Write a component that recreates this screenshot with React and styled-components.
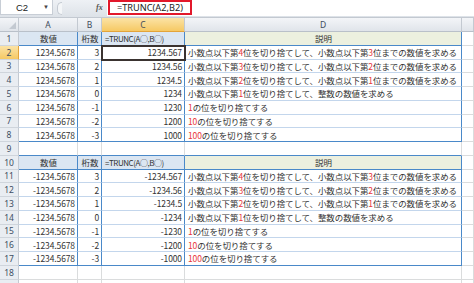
import React from "react";
import styled, { createGlobalStyle, css } from "styled-components";

const Global = createGlobalStyle`
  html, body { margin: 0; padding: 0; background: #ffffff; }
  body { font-family: "Noto Sans CJK JP", "Noto Sans", sans-serif; overflow: hidden; }
`;

const Page = styled.div`
  width: 474px;
  height: 283px;
  overflow: hidden;
  background: #ffffff;
  display: flex;
  flex-direction: column;
`;

const FormulaBar = styled.div`
  height: 18px;
  flex: none;
  display: flex;
  align-items: flex-start;
  background: linear-gradient(#eef1f5, #dde2e8);
  border-bottom: 1px solid #c3c9d1;
  box-sizing: border-box;
`;

const NameBox = styled.div`
  width: 53px;
  flex: none;
  height: 15px;
  box-sizing: border-box;
  background: #fff;
  border: 1px solid #c8ced6;
  border-top: none;
  display: flex;
  align-items: center;
  font-family: "Liberation Sans", sans-serif;
  font-size: 9.5px;
  color: #222;
  padding-left: 15px;
`;

const Arrow = styled.span`
  margin-left: auto;
  margin-right: 3px;
  font-size: 6px;
  color: #444;
`;

const Grip = styled.div`
  flex: none;
  width: 4px;
  height: 11px;
  margin: 2px 0 0 4px;
  border: 1px solid #c4cad2;
  border-right: none;
  border-radius: 5px 0 0 5px;
  background: #f4f6f8;
`;

const Fx = styled.div`
  flex: none;
  margin: 2px 0 0 34px;
  width: 8px;
  font-family: "Liberation Serif", serif;
  font-style: italic;
  font-weight: bold;
  font-size: 8px;
  color: #555;
  line-height: 12px;
`;

const Input = styled.div`
  flex: 1;
  margin-left: 3px;
  height: 16px;
  background: #fff;
  box-sizing: border-box;
  display: flex;
  align-items: flex-start;
  padding-left: 1px;
`;

const FormulaBox = styled.div`
  flex: none;
  width: 84px;
  height: 15px;
  box-sizing: border-box;
  border: 2px solid #e2182b;
  display: flex;
  align-items: center;
  padding-left: 7px;
  font-family: "Noto Sans", sans-serif;
  font-size: 9.2px;
  color: #222;
`;

const Sheet = styled.div`
  display: grid;
  grid-template-columns: 19px 59px 24px 83px 277px 1fr;
  grid-template-rows: 14px;
  grid-auto-rows: 13.75px;
`;

const headerBase = css`
  box-sizing: border-box;
  display: flex;
  align-items: center;
  justify-content: center;
  font-family: "Noto Sans", sans-serif;
  font-size: 8.5px;
  color: #3f4b5a;
  white-space: nowrap;
  overflow: hidden;
`;

const Corner = styled.div`
  ${headerBase};
  background: linear-gradient(#f3f5f8, #e0e4ea);
  border-right: 1px solid #c3c9d1;
  border-bottom: 1px solid #b9c0c9;
  position: relative;
`;

const CornerTri = styled.div`
  position: absolute;
  right: 2px;
  bottom: 2px;
  width: 0;
  height: 0;
  border-left: 7px solid transparent;
  border-bottom: 7px solid #c3c9d1;
`;

const ColHead = styled.div`
  ${headerBase};
  background: ${(p) =>
    p.$sel ? "linear-gradient(#fbe3a6, #f6c964)" : "linear-gradient(#f3f5f8, #e0e4ea)"};
  border-right: 1px solid #c3c9d1;
  border-bottom: 1px solid ${(p) => (p.$sel ? "#e3a43a" : "#b9c0c9")};
`;

const RowHead = styled.div`
  ${headerBase};
  background: ${(p) => (p.$sel ? "linear-gradient(#fbe3a6, #f6c964)" : "#e9edf2")};
  border-right: 1px solid ${(p) => (p.$sel ? "#e3a43a" : "#c3c9d1")};
  border-bottom: 1px solid #cfd5dc;
  color: #3d4e63;
`;

const Cell = styled.div`
  box-sizing: border-box;
  display: flex;
  align-items: center;
  justify-content: ${(p) => p.$align || "flex-start"};
  padding: 0 2px 0 3px;
  font-size: ${(p) => (p.$tight ? "8px" : "8.5px")};
  letter-spacing: ${(p) => (p.$tight ? "-0.45px" : "-0.1px")};
  color: #333;
  white-space: nowrap;
  overflow: visible;
  background: ${(p) => p.$bg || "#fff"};
  border-right: 1px solid ${(p) => p.$br || "#dadcdd"};
  border-bottom: 1px solid ${(p) => p.$bb || "#dadcdd"};
  position: relative;
  ${(p) =>
    p.$active &&
    css`
      outline: 2px solid #3a3330;
      outline-offset: -1px;
      z-index: 2;
    `}
`;

const Red = styled.span`
  color: #e8353a;
`;

const BLUE = "#4a89c9";
const LIGHT = "#c3d6ec";
const HEAD_BLUE = "#dbe6f2";
const HEAD_BEIGE = "#ecf0df";

const descs = [
  ["小数点以下第", "4", "位を切り捨てして、小数点以下第", "3", "位までの数値を求める"],
  ["小数点以下第", "3", "位を切り捨てして、小数点以下第", "2", "位までの数値を求める"],
  ["小数点以下第", "2", "位を切り捨てして、小数点以下第", "1", "位までの数値を求める"],
  ["小数点以下第", "1", "位を切り捨てして、整数の数値を求める"],
  ["", "1", "の位を切り捨てする"],
  ["", "10", "の位を切り捨てする"],
  ["", "100", "の位を切り捨てする"],
];

const digits = ["3", "2", "1", "0", "-1", "-2", "-3"];
const pos = ["1234.567", "1234.56", "1234.5", "1234", "1230", "1200", "1000"];

function Desc({ parts }) {
  return (
    <>
      {parts.map((t, i) => (i % 2 === 1 ? <Red key={i}>{t}</Red> : <span key={i}>{t}</span>))}
    </>
  );
}

function TableBlock({ startRow, neg }) {
  const rows = [];
  rows.push(
    <React.Fragment key={startRow}>
      <RowHead>{startRow}</RowHead>
      <Cell $align="center" $bg={HEAD_BLUE} $br={BLUE} $bb={BLUE}>数値</Cell>
      <Cell $align="center" $bg={HEAD_BLUE} $br={BLUE} $bb={BLUE}>桁数</Cell>
      <Cell $tight $bg={HEAD_BLUE} $br={BLUE} $bb={BLUE}>=TRUNC(A○,B○)</Cell>
      <Cell $align="center" $bg={HEAD_BEIGE} $br={BLUE} $bb={BLUE}>説明</Cell>
      <Cell />
    </React.Fragment>
  );
  digits.forEach((d, i) => {
    const r = startRow + 1 + i;
    const last = i === digits.length - 1;
    const bb = last ? BLUE : LIGHT;
    rows.push(
      <React.Fragment key={r}>
        <RowHead $sel={r === 2}>{r}</RowHead>
        <Cell $align="flex-end" $br={BLUE} $bb={bb}>{neg ? "-1234.5678" : "1234.5678"}</Cell>
        <Cell $align="flex-end" $br={BLUE} $bb={bb}>{d}</Cell>
        <Cell $align="flex-end" $br={BLUE} $bb={bb} $active={r === 2}>
          {neg ? "-" + pos[i] : pos[i]}
        </Cell>
        <Cell $br={BLUE} $bb={bb}>
          <Desc parts={descs[i]} />
        </Cell>
        <Cell />
      </React.Fragment>
    );
  });
  return rows;
}

function EmptyRow({ n, blueBottom }) {
  const bb = blueBottom ? BLUE : undefined;
  return (
    <>
      <RowHead>{n}</RowHead>
      <Cell $bb={bb} />
      <Cell $bb={bb} />
      <Cell $bb={bb} />
      <Cell $bb={bb} />
      <Cell />
    </>
  );
}

export default function App() {
  return (
    <Page>
      <Global />
      <FormulaBar>
        <NameBox>
          C2<Arrow>▼</Arrow>
        </NameBox>
        <Grip />
        <Fx>fx</Fx>
        <Input>
          <FormulaBox>=TRUNC(A2,B2)</FormulaBox>
        </Input>
      </FormulaBar>
      <Sheet>
        <Corner>
          <CornerTri />
        </Corner>
        <ColHead>A</ColHead>
        <ColHead>B</ColHead>
        <ColHead $sel>C</ColHead>
        <ColHead>D</ColHead>
        <ColHead />
        <TableBlock startRow={1} neg={false} />
        <EmptyRow n={9} blueBottom />
        <TableBlock startRow={10} neg />
        <EmptyRow n={18} />
        <EmptyRow n="" />
      </Sheet>
    </Page>
  );
}
